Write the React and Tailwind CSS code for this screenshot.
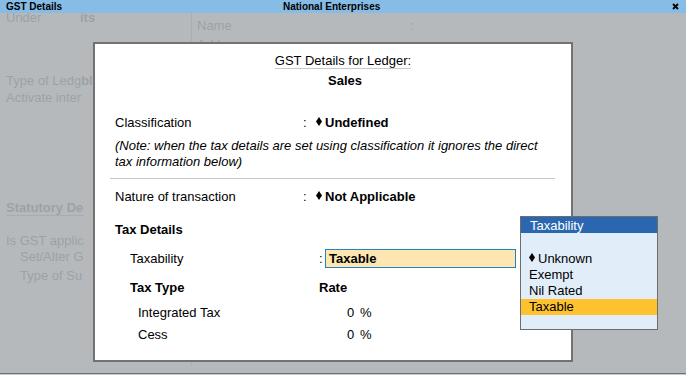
import React from 'react';

const Diamond = () => (
  <svg width="6" height="9" viewBox="0 0 6 9" className="inline-block mr-[3px] -mt-[4px] align-middle">
    <path d="M3 0 L6 4.5 L3 9 L0 4.5 Z" fill="#000" />
  </svg>
);

const Row = ({ label, children, className = '' }) => (
  <div className={`flex h-4 leading-4 ${className}`}>
    <div className="w-[188px]">{label}</div>
    <div className="w-[13px]">:</div>
    <div className="font-bold">{children}</div>
  </div>
);

export default function App() {
  return (
    <div
      className="relative w-[686px] h-[375px] overflow-hidden bg-[#b6b9bc] flex flex-col text-[13px] text-black"
      style={{ fontFamily: '"Liberation Sans", Arial, sans-serif' }}
    >
      {/* Title bar */}
      <div className="relative z-10 h-[13px] bg-[#86bce6] flex items-center px-[6px] text-[10px] font-bold leading-[13px]">
        <span className="w-[277px]">GST Details</span>
        <span className="flex-1">National Enterprises</span>
        <svg width="7" height="7" viewBox="0 0 7 7" className="mr-[1px]">
          <path d="M1 1 L6 6 M6 1 L1 6" stroke="#000" strokeWidth="1.8" />
        </svg>
      </div>

      {/* Faded background screen */}
      <div className="flex-1 flex text-[#9ea1a4] overflow-hidden">
        <div className="w-[191px] pl-[6px] flex flex-col -mt-[3px]">
          <div className="h-4 leading-4 flex">
            <span className="w-[74px]">Under</span>
            <span className="font-bold">its</span>
          </div>
          <div className="h-4 leading-4 mt-[47px] flex">
            <span>Type of Ledg</span>
            <span className="font-bold">bl</span>
          </div>
          <div className="h-4 leading-4 mt-[1px]">Activate inter</div>
          <div className="h-4 leading-4 mt-[94px] font-bold border-b border-[#a9acaf] w-[78px] whitespace-nowrap">
            Statutory De
          </div>
          <div className="h-4 leading-4 mt-[17px]">Is GST applic</div>
          <div className="h-4 leading-4 pl-[14px]">Set/Alter G</div>
          <div className="h-4 leading-4 mt-[3px] pl-[14px]">Type of Su</div>
        </div>
        <div className="border-l border-[#aaadb0] pl-[5px] pt-[5px] h-[352px] w-[400px]">
          <div className="h-4 leading-4 flex">
            <span className="w-[213px]">Name</span>
            <span>:</span>
          </div>
          <div className="h-4 leading-4 mt-[3px]">Address</div>
        </div>
      </div>
      <div className="h-[2px] border-t border-[#6f6f6f] bg-[#c9cbcd]" />

      {/* Dialog */}
      <div className="absolute left-[93px] top-[42px] w-[480px] h-[320px] bg-white border-2 border-[#727272] pl-[20px] pr-[10px]">
        <div className="mt-[9px] flex justify-center pl-[10px]">
          <span className="h-4 leading-4 border-b border-[#c8c8c8]">GST Details for Ledger:</span>
        </div>
        <div className="mt-[4px] h-4 leading-4 text-center font-bold pl-[14px]">Sales</div>

        <Row label="Classification" className="mt-[26px]">
          <Diamond />
          Undefined
        </Row>
        <div className="mt-[7px] italic leading-4 w-[432px]">
          (Note: when the tax details are set using classification it ignores the direct tax information below)
        </div>
        <div className="mt-[8px] -ml-[5px] mr-[6px] h-px bg-[#c8c8c8]" />

        <Row label="Nature of transaction" className="mt-[10px]">
          <Diamond />
          Not Applicable
        </Row>

        <div className="mt-[17px] h-4 leading-4 font-bold">Tax Details</div>

        <div className="mt-[11px] flex items-center h-[19px] pl-[15px]">
          <div className="w-[189px]">Taxability</div>
          <div className="w-[6px]">:</div>
          <div className="w-[191px] h-[19px] bg-[#fee6b0] border border-[#2283c4] pl-[3px] leading-[17px] font-bold">
            Taxable
          </div>
        </div>

        <div className="mt-[12px] h-4 leading-4 flex font-bold pl-[15px]">
          <div className="w-[189px]">Tax Type</div>
          <div>Rate</div>
        </div>

        <div className="mt-[9px] h-4 leading-4 flex pl-[23px]">
          <div className="w-[209px]">Integrated Tax</div>
          <div className="w-[13px]">0</div>
          <div>%</div>
        </div>
        <div className="mt-[6px] h-4 leading-4 flex pl-[23px]">
          <div className="w-[209px]">Cess</div>
          <div className="w-[13px]">0</div>
          <div>%</div>
        </div>
      </div>

      {/* Taxability list popup */}
      <div className="absolute left-[520px] top-[216px] w-[138px] h-[114px] border border-[#6d6d6d] bg-[#e1eefa] flex flex-col">
        <div className="h-4 leading-4 bg-[#2b67b1] text-white pl-[9px] pt-[1px]">Taxability</div>
        <div className="h-4" />
        <div className="h-4 leading-4 pl-[8px] mt-[2px]">
          <Diamond />
          Unknown
        </div>
        <div className="h-4 leading-4 pl-[8px]">Exempt</div>
        <div className="h-4 leading-4 pl-[8px]">Nil Rated</div>
        <div className="h-4 leading-4 pl-[8px] bg-[#fec22f]">Taxable</div>
      </div>
    </div>
  );
}
